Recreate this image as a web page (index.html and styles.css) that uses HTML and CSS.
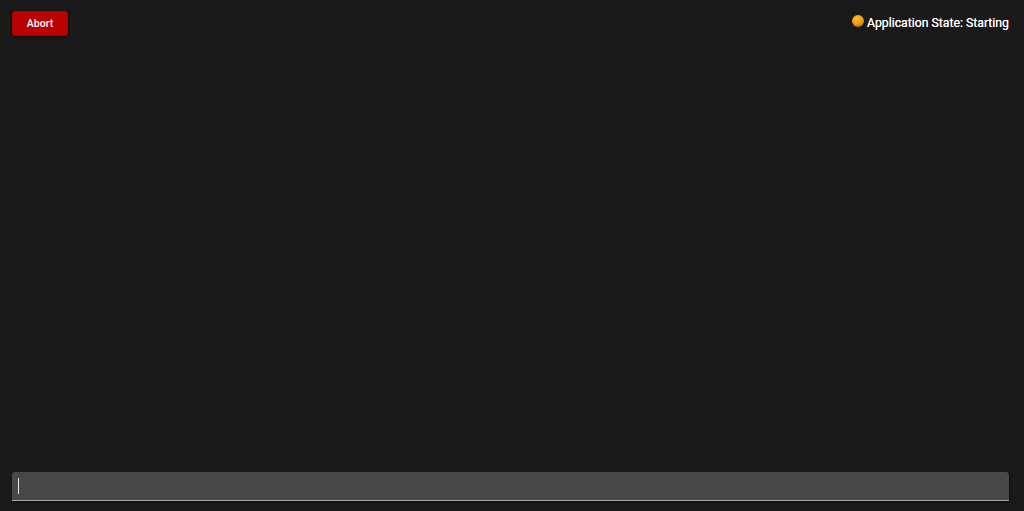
FILE: index.html
```html
<!DOCTYPE html>
<html lang="en">
<head>
<meta charset="utf-8">
<title>Application State</title>
<link rel="stylesheet" href="styles.css">
</head>
<body>
<div class="app">
  <header class="topbar">
    <button class="abort" type="button">Abort</button>
    <div class="state"><span class="orb"></span><span class="label">Application State: Starting</span></div>
  </header>
  <main class="spacer"></main>
  <div class="field"><span class="caret"></span></div>
</div>
</body>
</html>
```
FILE: styles.css
```css
* { box-sizing: border-box; }
html, body { margin: 0; height: 100%; }
body { background: #1a1a1a; color: #fff; font-family: Roboto, "Liberation Sans", sans-serif; overflow: hidden; }
.app { height: 511px; display: flex; flex-direction: column; padding: 11px 15px 10px 12px; }
.topbar { display: flex; justify-content: space-between; align-items: flex-start; }
.abort { width: 56px; height: 25px; padding: 0; border: 1px solid #a60000; border-radius: 3px; background: #bb0000; color: #fff; font: 500 10.5px/23px Roboto, sans-serif; box-shadow: 0 1px 3px rgba(0,0,0,.5); }
.state { display: flex; align-items: flex-start; gap: 3px; margin-top: 3px; font-size: 12.25px; line-height: 16px; }
.label { margin-top: 1px; text-shadow: 0 0 .5px #fff; }
.orb { width: 12px; height: 12px; margin-top: 1px; border-radius: 50%; background: radial-gradient(circle at 42% 28%, #ffbe2e, #f09a10 50%, #a86400 85%, #7a4800); }
.spacer { flex: 1; }
.field { height: 29px; display: flex; align-items: center; padding-left: 6px; background: #484848; border-radius: 3px 3px 0 0; border-bottom: 1px solid #a8a8a8; box-shadow: 1px 1px 3px rgba(0,0,0,.6); }
.caret { width: 1px; height: 16px; background: #e8e8e8; }
```
